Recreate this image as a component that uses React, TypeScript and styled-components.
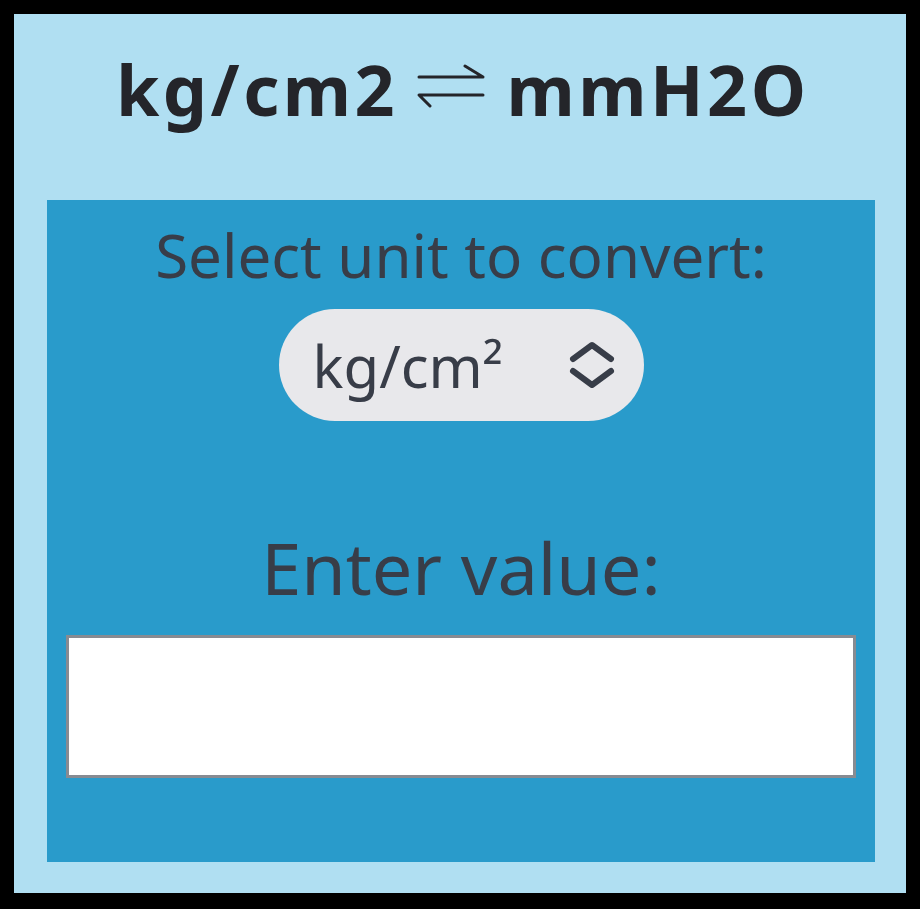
import styled, { createGlobalStyle } from "styled-components";

const GlobalStyle = createGlobalStyle`
  html, body {
    margin: 0;
    padding: 0;
    background: #000;
  }
  body {
    font-family: "Noto Sans", "Open Sans", sans-serif;
  }
`;

const Frame = styled.div`
  width: 920px;
  height: 909px;
  box-sizing: border-box;
  padding: 14px 14px 16px 14px;
  background: #000;
`;

const Card = styled.div`
  height: 100%;
  box-sizing: border-box;
  background: #b0dff2;
  display: flex;
  flex-direction: column;
  padding: 0 31px 31px 33px;
`;

const Title = styled.h1`
  margin: 0;
  height: 186px;
  box-sizing: border-box;
  padding-bottom: 36px;
  display: flex;
  align-items: center;
  justify-content: center;
  gap: 20px;
  font-family: "Noto Sans", sans-serif;
  font-weight: 700;
  font-size: 70px;
  color: #24252a;
`;

const Word = styled.span`
  letter-spacing: 3.5px;
  margin-right: -3.5px;
`;

const Arrows = styled.svg`
  width: 72px;
  height: 46px;
  margin-bottom: 8px;
`;

const Panel = styled.div`
  flex: 1;
  background: #299bcb;
  display: flex;
  flex-direction: column;
  align-items: center;
  padding: 19px 19px 0 19px;
`;

const Label = styled.div<{ size: number }>`
  font-family: "Noto Sans", sans-serif;
  font-size: ${(p) => p.size}px;
  color: #383d48;
  line-height: 1.2;
`;

const Select = styled.div`
  margin-top: 18px;
  width: 365px;
  height: 112px;
  box-sizing: border-box;
  border-radius: 56px;
  background: #e8e8eb;
  display: flex;
  align-items: center;
  justify-content: space-between;
  padding: 0 29px 0 34px;
  font-size: 58px;
  color: #383d48;
`;

const Chevrons = styled.svg`
  width: 46px;
  height: 50px;
`;

const Spacer = styled.div`
  height: 103px;
`;

const Input = styled.input`
  margin-top: 25px;
  width: 100%;
  height: 143px;
  box-sizing: border-box;
  border: 3px solid #878b92;
  background: #fff;
  font-size: 40px;
  font-family: "Noto Sans", sans-serif;
  outline: none;
`;

function EqArrows() {
  return (
    <Arrows viewBox="0 0 72 46">
      <path
        d="M4 15 H68 L50 4 M68 33 H4 L15 44"
        fill="none"
        stroke="#24252a"
        strokeWidth="3"
        strokeLinecap="round"
        strokeLinejoin="round"
      />
    </Arrows>
  );
}

function UpDown() {
  return (
    <Chevrons viewBox="0 0 46 50">
      <path
        d="M4 19 L23 5 L42 19 M4 31 L23 45 L42 31"
        fill="none"
        stroke="#383d48"
        strokeWidth="6"
        strokeLinecap="round"
        strokeLinejoin="round"
      />
    </Chevrons>
  );
}

export default function App() {
  return (
    <>
      <GlobalStyle />
      <Frame>
        <Card>
          <Title>
            <Word>kg/cm2</Word>
            <EqArrows />
            <Word>mmH2O</Word>
          </Title>
          <Panel>
            <Label size={60}>Select unit to convert:</Label>
            <Select>
              <span>kg/cm²</span>
              <UpDown />
            </Select>
            <Spacer />
            <Label size={72}>Enter value:</Label>
            <Input type="text" />
          </Panel>
        </Card>
      </Frame>
    </>
  );
}
